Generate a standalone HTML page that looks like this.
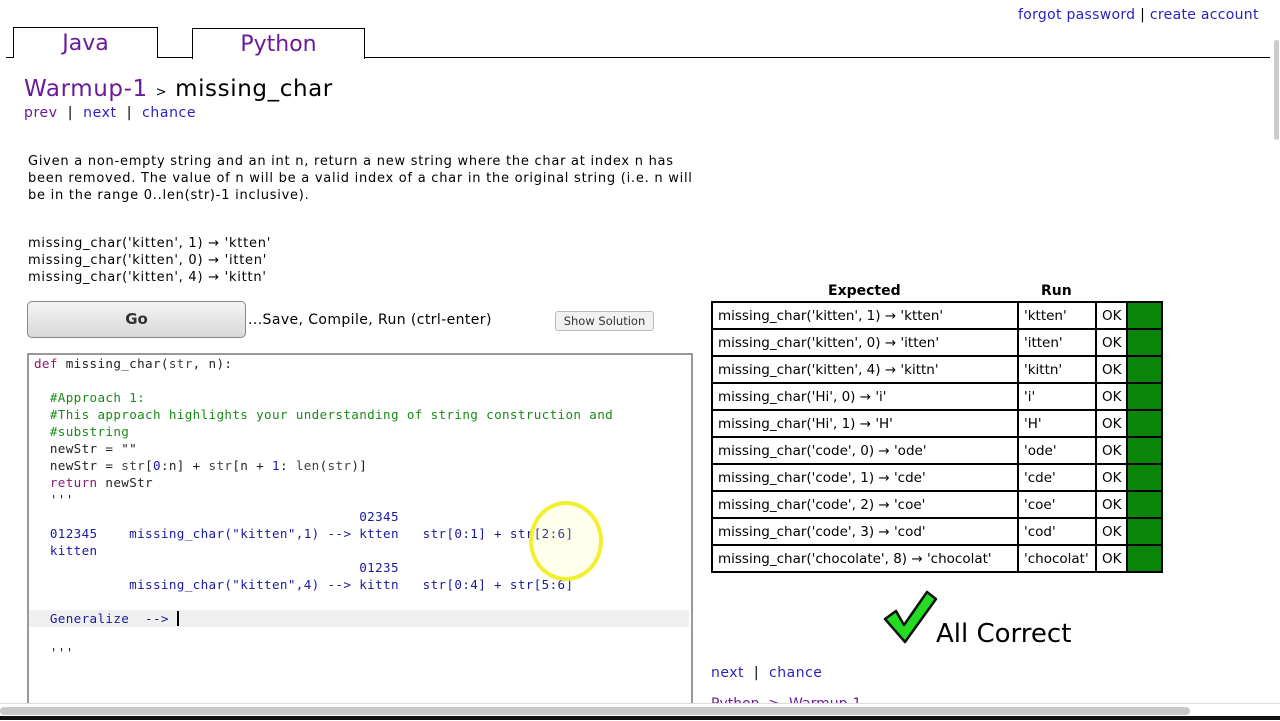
<!DOCTYPE html>
<html><head><meta charset="utf-8"><style>
body{margin:0;width:1280px;height:720px;overflow:hidden;background:#fff;font-family:"DejaVu Sans",Verdana,sans-serif;font-size:13px;color:#000;position:relative}
.a{position:absolute;white-space:nowrap}
a,.lk{color:#2a1fbf;text-decoration:none}
.tab{position:absolute;border:1px solid #000;border-bottom:none;background:#fff;color:#6a1b9a;font-size:22px;text-align:center;font-family:"DejaVu Sans",sans-serif}
.code{font-family:"DejaVu Sans Mono",monospace;font-size:12.6px;color:#222;letter-spacing:0.35px}
.c{color:#1a8a1a}.k{color:#8a1a6a}.n{color:#1a1aa0}.s{color:#444}
table{position:absolute;left:711px;top:301px;border-collapse:collapse;font-size:13.5px}
td{border:2px solid #000;height:25px;padding:0 5px;white-space:nowrap}
td.g{background:#0a850a;width:23px}
</style></head><body>
<div class="a" style="left:1018px;top:7px;font-size:14px;letter-spacing:0.3px"><span class="lk">forgot password</span> | <span class="lk">create account</span></div>
<div style="position:absolute;left:6px;top:57px;width:1264px;border-top:1px solid #000"></div>
<div class="tab" style="left:13px;top:27px;width:143px;height:30px;line-height:32px">Java</div>
<div class="tab" style="left:192px;top:28px;width:171px;height:30px;line-height:32px">Python</div>
<div class="a" style="left:24px;top:76px;font-size:23px;letter-spacing:0.6px"><span style="color:#6a1b9a">Warmup-1</span> <span style="font-size:13px">&gt;</span> missing_char</div>
<div class="a" style="left:24px;top:105px;font-size:14px;letter-spacing:0.6px"><span style="color:#6a1b9a">prev</span> &nbsp;| &nbsp;<span class="lk">next</span> &nbsp;| &nbsp;<span class="lk">chance</span></div>
<div class="a" style="left:28px;top:153px;line-height:17px;font-size:13px;white-space:normal;width:670px;letter-spacing:0.75px">Given a non-empty string and an int n, return a new string where the char at index n has been removed. The value of n will be a valid index of a char in the original string (i.e. n will be in the range 0..len(str)-1 inclusive).</div>
<div class="a" style="left:28px;top:235px;line-height:17px;letter-spacing:0.75px">missing_char('kitten', 1) → 'ktten'<br>missing_char('kitten', 0) → 'itten'<br>missing_char('kitten', 4) → 'kittn'</div>
<div class="a" style="left:27px;top:301px;width:217px;height:35px;border:1px solid #888;border-radius:5px;background:linear-gradient(#f4f4f4,#d8d8d8);text-align:center;line-height:35px;font-weight:bold;font-size:15px;color:#333">Go</div>
<div class="a" style="left:248px;top:312px;font-size:14px;letter-spacing:0.4px">...Save, Compile, Run (ctrl-enter)</div>
<div class="a" style="left:555px;top:311px;width:97px;height:18px;border:1px solid #bbb;border-radius:3px;background:#f1f1f1;font-size:11.5px;text-align:center;line-height:18px;color:#333">Show Solution</div>
<div style="position:absolute;left:27px;top:353px;width:662px;height:360px;border:2px solid #999;border-bottom:none"></div>
<div style="position:absolute;left:29px;top:610px;width:660px;height:17px;background:#f0f0f0"></div>
<div class="a code" style="left:34px;top:355px;line-height:17px"><span class="k">def</span> missing_char(<span class="s">str</span>, n):<br><br>
&nbsp;&nbsp;<span class="c">#Approach 1:</span><br>
&nbsp;&nbsp;<span class="c">#This approach highlights your understanding of string construction and</span><br>
&nbsp;&nbsp;<span class="c">#substring</span><br>
&nbsp;&nbsp;newStr = ""<br>
&nbsp;&nbsp;newStr = <span class="s">str</span>[<span class="n">0</span>:n] + <span class="s">str</span>[n + <span class="n">1</span>: <span class="s">len</span>(<span class="s">str</span>)]<br>
&nbsp;&nbsp;<span class="k">return</span> newStr<br>
&nbsp;&nbsp;'''<br>
<span class="n">&nbsp;&nbsp;&nbsp;&nbsp;&nbsp;&nbsp;&nbsp;&nbsp;&nbsp;&nbsp;&nbsp;&nbsp;&nbsp;&nbsp;&nbsp;&nbsp;&nbsp;&nbsp;&nbsp;&nbsp;&nbsp;&nbsp;&nbsp;&nbsp;&nbsp;&nbsp;&nbsp;&nbsp;&nbsp;&nbsp;&nbsp;&nbsp;&nbsp;&nbsp;&nbsp;&nbsp;&nbsp;&nbsp;&nbsp;&nbsp;&nbsp;02345<br>
&nbsp;&nbsp;012345&nbsp;&nbsp;&nbsp;&nbsp;missing_char("kitten",1) --&gt; ktten&nbsp;&nbsp;&nbsp;str[0:1] + str[2:6]<br>
&nbsp;&nbsp;kitten<br>
&nbsp;&nbsp;&nbsp;&nbsp;&nbsp;&nbsp;&nbsp;&nbsp;&nbsp;&nbsp;&nbsp;&nbsp;&nbsp;&nbsp;&nbsp;&nbsp;&nbsp;&nbsp;&nbsp;&nbsp;&nbsp;&nbsp;&nbsp;&nbsp;&nbsp;&nbsp;&nbsp;&nbsp;&nbsp;&nbsp;&nbsp;&nbsp;&nbsp;&nbsp;&nbsp;&nbsp;&nbsp;&nbsp;&nbsp;&nbsp;&nbsp;01235<br>
&nbsp;&nbsp;&nbsp;&nbsp;&nbsp;&nbsp;&nbsp;&nbsp;&nbsp;&nbsp;&nbsp;&nbsp;missing_char("kitten",4) --&gt; kittn&nbsp;&nbsp;&nbsp;str[0:4] + str[5:6]<br><br>
&nbsp;&nbsp;Generalize&nbsp;&nbsp;--&gt; </span><span style="border-left:2px solid #000">&nbsp;</span><br><br>
&nbsp;&nbsp;'''</div>
<div style="position:absolute;left:529px;top:501px;width:66px;height:72px;border:4px solid #f2ef30;border-radius:50%;background:rgba(255,255,120,0.15)"></div>
<div class="a" style="left:828px;top:283px;font-weight:bold;font-size:14px">Expected</div>
<div class="a" style="left:1041px;top:283px;font-weight:bold;font-size:14px">Run</div>
<table>
<tr><td style="width:294px">missing_char('kitten', 1) → 'ktten'</td><td style="width:66px">'ktten'</td><td>OK</td><td class="g"></td></tr>
<tr><td>missing_char('kitten', 0) → 'itten'</td><td>'itten'</td><td>OK</td><td class="g"></td></tr>
<tr><td>missing_char('kitten', 4) → 'kittn'</td><td>'kittn'</td><td>OK</td><td class="g"></td></tr>
<tr><td>missing_char('Hi', 0) → 'i'</td><td>'i'</td><td>OK</td><td class="g"></td></tr>
<tr><td>missing_char('Hi', 1) → 'H'</td><td>'H'</td><td>OK</td><td class="g"></td></tr>
<tr><td>missing_char('code', 0) → 'ode'</td><td>'ode'</td><td>OK</td><td class="g"></td></tr>
<tr><td>missing_char('code', 1) → 'cde'</td><td>'cde'</td><td>OK</td><td class="g"></td></tr>
<tr><td>missing_char('code', 2) → 'coe'</td><td>'coe'</td><td>OK</td><td class="g"></td></tr>
<tr><td>missing_char('code', 3) → 'cod'</td><td>'cod'</td><td>OK</td><td class="g"></td></tr>
<tr><td>missing_char('chocolate', 8) → 'chocolat'</td><td>'chocolat'</td><td>OK</td><td class="g"></td></tr>
</table>
<svg class="a" style="left:882px;top:589px" width="56" height="56" viewBox="0 0 56 56"><path d="M3 30 L14 22 L22 36 L45 3 L54 10 L23 53 Z" fill="#22dd22" stroke="#111" stroke-width="2.5" stroke-linejoin="round"/></svg>
<div class="a" style="left:936px;top:619px;font-size:26px;font-family:'DejaVu Sans',sans-serif">All Correct</div>
<div class="a" style="left:711px;top:665px;font-size:14px;letter-spacing:0.5px"><span class="lk">next</span> &nbsp;| &nbsp;<span class="lk">chance</span></div>
<div class="a" style="left:711px;top:696px;font-size:14px;color:#6a1b9a">Python &nbsp;&gt; &nbsp;Warmup-1</div>
<div style="position:absolute;left:0;top:703px;width:1280px;height:17px;background:#fff;border-top:1px solid #ddd"></div>
<div style="position:absolute;left:0;top:707px;width:1190px;height:8px;background:#c8c8c8;border-radius:4px"></div>
<div style="position:absolute;left:0;top:716px;width:1280px;height:4px;background:#111"></div>
<div style="position:absolute;left:1274px;top:40px;width:5px;height:100px;background:#ccc;border-radius:3px"></div>
</body></html>
